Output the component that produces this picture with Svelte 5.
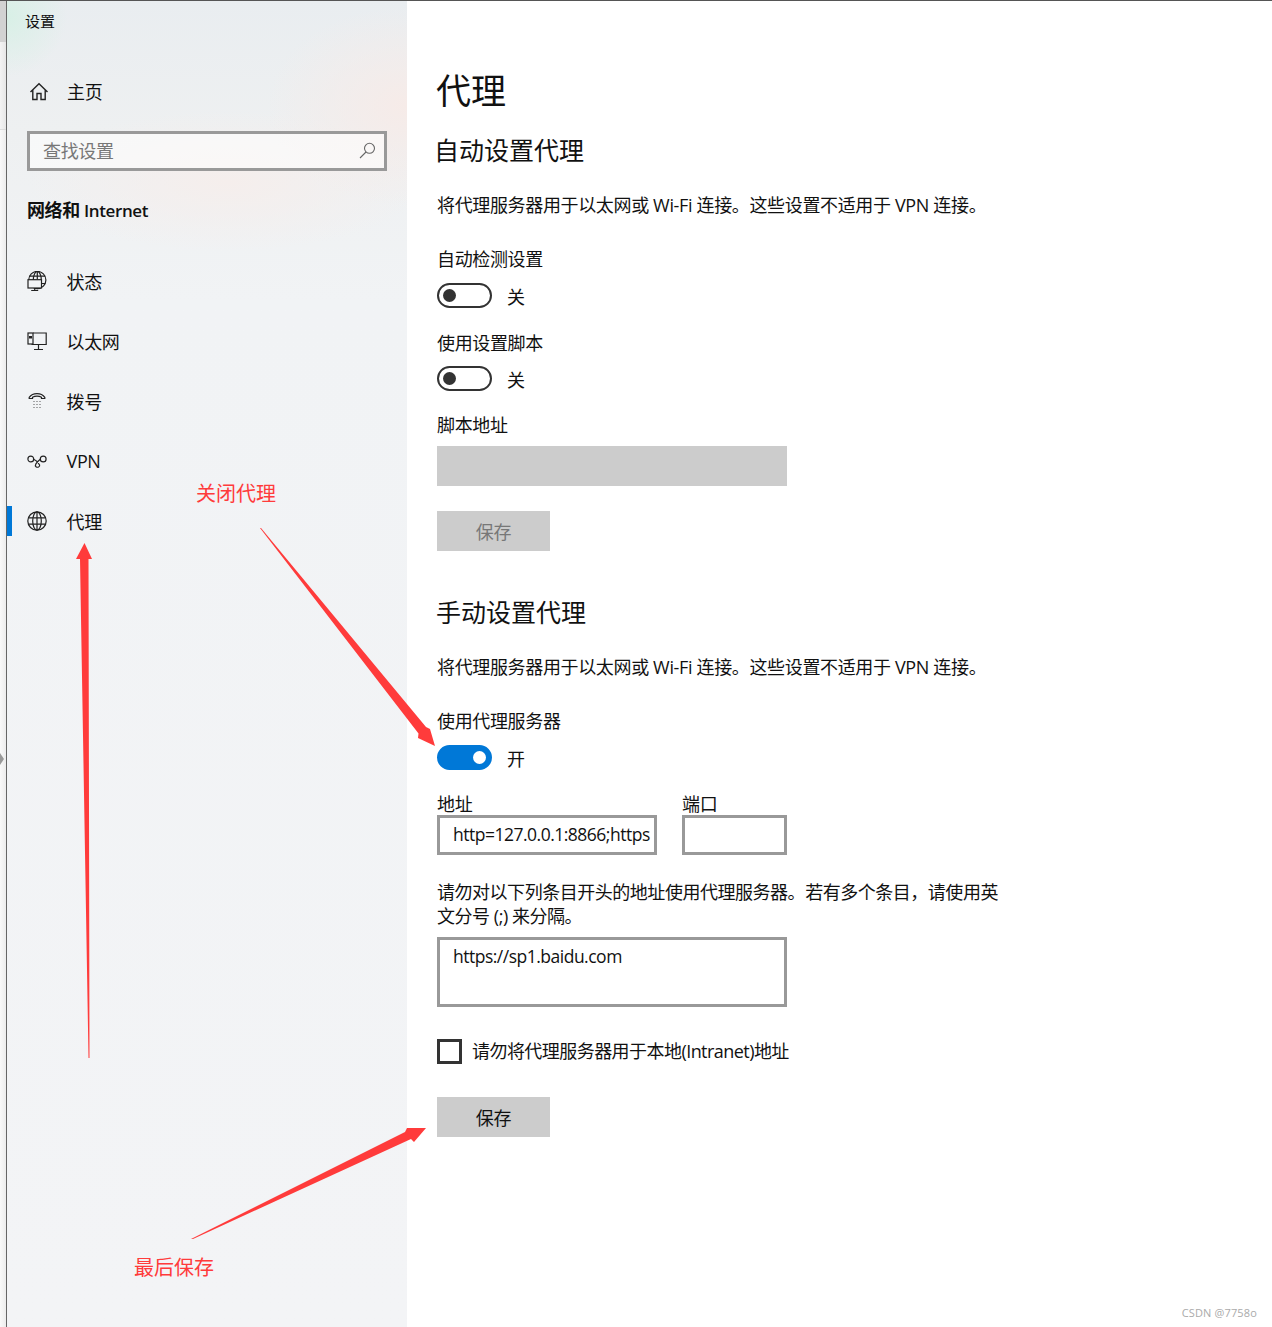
<script>
  const navItems = [
    { label: '状态', icon: 'status' },
    { label: '以太网', icon: 'ethernet' },
    { label: '拨号', icon: 'dial' },
    { label: 'VPN', icon: 'vpn' },
    { label: '代理', icon: 'proxy', active: true }
  ];
  const desc = '将代理服务器用于以太网或 Wi-Fi 连接。这些设置不适用于 VPN 连接。';
</script>

<div class="page">
  <div class="strip">
    <div class="strip-top"></div>
    <div class="strip-mid"></div>
    <div class="strip-low"></div>
    <span class="grip"></span>
  </div>

  <aside class="sidebar">
    <div class="app-title">设置</div>
    <div class="home">
      <svg class="ico" width="20" height="20" viewBox="0 0 20 20" fill="none" stroke="#222" stroke-width="1.4">
        <path d="M1.500 10 10 1.800 18.500 10M3.800 8v9.500h4.200v-6h4v6h4.200V8" />
      </svg>
      <span>主页</span>
    </div>
    <div class="search">
      <span>查找设置</span>
      <svg width="17" height="17" viewBox="0 0 17 17" fill="none" stroke="#666" stroke-width="1.1">
        <circle cx="10.500" cy="6.300" r="5" />
        <path d="M7 10 1 16" />
      </svg>
    </div>
    <div class="group">网络和 <span>Internet</span></div>

    <nav class="nav">
      {#each navItems as item}
        <div class="nav-item" class:active={item.active}>
          <span class="nav-ico">
            {#if item.icon === 'status'}
              <svg width="20" height="20" viewBox="0 0 20 20" fill="none" stroke="#222" stroke-width="1.2">
                <circle cx="10.300" cy="9" r="8.600" />
                <ellipse cx="10.300" cy="9" rx="4" ry="8.600" />
                <path d="M10.300 .4v8M2.500 5.200h15.600M14.500 12.500h3.600" />
                <rect x="1" y="8.700" width="13.500" height="8.300" fill="#f2f4f6" />
                <path d="M7.700 17v2.500M4.200 19.500h7" />
              </svg>
            {:else if item.icon === 'ethernet'}
              <svg width="20" height="20" viewBox="0 0 20 20" fill="none" stroke="#222" stroke-width="1.2">
                <path d="M6 2h13.200v11.500H4.500" />
                <path d="M11.500 13.500v4.800M7 18.500h9" />
                <rect x="1" y="2" width="5" height="11" fill="#f2f4f6" />
                <rect x="2" y="5" width="3" height="2.500" fill="#222" stroke="none" />
              </svg>
            {:else if item.icon === 'dial'}
              <svg width="20" height="20" viewBox="0 0 20 20" fill="none" stroke="#222" stroke-width="1.2">
                <path d="M2.200 7.500V6.300C4 3.800 7 2.600 10 2.600s6 1.200 7.800 3.700v1.200h-3.300V6.300C13 5.500 11.500 5.200 10 5.200s-3 .3-4.500 1.100v1.200z" />
                <path d="M6.500 10.500h1M9.500 10.500h1M12.500 10.500h1M6.500 13.500h1M9.500 13.500h1M12.500 13.500h1M6.500 16.500h1M9.500 16.500h1M12.500 16.500h1" stroke-width="1" opacity=".75" />
              </svg>
            {:else if item.icon === 'vpn'}
              <svg width="20" height="20" viewBox="0 0 20 20" fill="none" stroke="#222" stroke-width="1.2">
                <circle cx="3.800" cy="8" r="2.900" />
                <circle cx="16.200" cy="8" r="2.900" />
                <path d="M6.700 8.300c2.800 1.200 4.900 3.400 5.900 5.700.5 1.900-2 2.800-3.600 1.800-1.500-1.300-.2-3.900 4.300-7.500" />
              </svg>
            {:else}
              <svg width="20" height="20" viewBox="0 0 20 20" fill="none" stroke="#222" stroke-width="1.2">
                <circle cx="10" cy="10" r="9.200" />
                <ellipse cx="10" cy="10" rx="4.300" ry="9.200" />
                <path d="M10 .8v18.400M1.600 6.800h16.800M1.600 13.200h16.800" />
              </svg>
            {/if}
          </span>
          <span class="nav-label">{item.label}</span>
        </div>
      {/each}
    </nav>
  </aside>

  <main class="main">
    <h1>代理</h1>
    <h2 class="auto">自动设置代理</h2>
    <p class="desc">{desc}</p>

    <div class="label first">自动检测设置</div>
    <div class="switch-row">
      <span class="toggle"><i></i></span><span class="state">关</span>
    </div>
    <div class="label next">使用设置脚本</div>
    <div class="switch-row">
      <span class="toggle"><i></i></span><span class="state">关</span>
    </div>
    <div class="label last">脚本地址</div>
    <div class="disabled-input"></div>
    <div class="btn disabled">保存</div>

    <h2 class="manual">手动设置代理</h2>
    <p class="desc">{desc}</p>

    <div class="label first">使用代理服务器</div>
    <div class="switch-row">
      <span class="toggle on"><i></i></span><span class="state">开</span>
    </div>

    <div class="addr-row">
      <div class="field addr">
        <div class="field-label">地址</div>
        <div class="box latin">http=127.0.0.1:8866;https</div>
      </div>
      <div class="field port">
        <div class="field-label">端口</div>
        <div class="box"></div>
      </div>
    </div>

    <p class="except">请勿对以下列条目开头的地址使用代理服务器。若有多个条目，请使用英文分号 (;) 来分隔。</p>
    <div class="box area latin">https://sp1.baidu.com</div>

    <div class="check-row">
      <span class="check"></span>
      <span class="check-text">请勿将代理服务器用于本地(Intranet)地址</span>
    </div>
    <div class="btn">保存</div>
  </main>

  <svg class="arrows" width="1272" height="1327" viewBox="0 0 1272 1327" fill="#ff3b3b">
    <polygon points="89.500,1058 88.500,1058 80,559 76,559 84.500,543 92,559 88.500,559" />
    <polygon points="260,528 261,528 426,727 430,729 435,746 418,738 418.500,733.500" />
    <polygon points="191,1239 405,1132 407,1128 426,1128 414,1142 411,1139 193,1239" />
  </svg>
  <div class="note note-close">关闭代理</div>
  <div class="note note-save">最后保存</div>
  <div class="mark">CSDN @7758o</div>
</div>

<style>
  :global(body) {
    margin: 0;
    background: #fff;
  }
  .page {
    position: relative;
    display: flex;
    width: 1272px;
    height: 1327px;
    overflow: hidden;
    background: #fff;
    color: #111;
    font-family: "Open Sans", "Noto Sans CJK SC", sans-serif;
    font-size: 18px;
    letter-spacing: -0.35px;
    border-top: 1px solid #555;
    box-sizing: border-box;
  }
  .strip {
    position: relative;
    width: 6px;
    flex: none;
    display: flex;
    flex-direction: column;
    border-right: 1px solid #666;
  }
  .strip-top {
    height: 41px;
    background: #d2d2d2;
  }
  .strip-mid {
    height: 87px;
    background: linear-gradient(90deg, #f4f4f4, #e6e6e6);
    border-bottom: 1px solid #dcdcdc;
  }
  .strip-low {
    flex: 1;
    background: linear-gradient(90deg, #fafafa, #ececec);
  }
  .grip {
    position: absolute;
    left: 0;
    top: 752px;
    border-left: 4px solid #999;
    border-top: 6px solid transparent;
    border-bottom: 6px solid transparent;
  }
  .sidebar {
    width: 400px;
    flex: none;
    display: flex;
    flex-direction: column;
    background:
      radial-gradient(60px 60px at 0 15px, #d8f0e6 0, rgba(216, 240, 230, 0) 100%),
      radial-gradient(140px 100px at 100% 105px, #f6ebe8 0, rgba(246, 235, 232, 0) 100%),
      radial-gradient(200px 70px at 55% 180px, #f5eeec 0, rgba(245, 238, 236, 0) 100%),
      linear-gradient(180deg, #e9edf0 0, #eef0f1 130px, #f1f3f5 300px, #f3f4f6 100%);
  }
  .app-title {
    margin: 12px 0 0 18px;
    height: 17px;
    line-height: 17px;
    font-size: 15px;
    letter-spacing: 0;
  }
  .home {
    display: flex;
    align-items: center;
    margin: 50px 0 0 22px;
    height: 22px;
  }
  .home span {
    margin-left: 18px;
  }
  .ico {
    display: block;
    margin-top: 1px;
  }
  .search {
    margin: 29px 0 0 20px;
    width: 360px;
    height: 40px;
    box-sizing: border-box;
    border: 3px solid #999;
    display: flex;
    align-items: center;
    justify-content: space-between;
    padding: 0 8px 2px 13px;
    color: #777;
    background: rgba(255, 255, 255, 0.55);
  }
  .group {
    margin: 27px 0 0 20px;
    height: 24px;
    line-height: 24px;
    font-weight: 700;
    letter-spacing: -0.4px;
  }
  .group span {
    font-size: 17px;
    font-weight: 600;
    letter-spacing: -0.4px;
  }
  .nav {
    margin-top: 29px;
    display: flex;
    flex-direction: column;
  }
  .nav-item {
    position: relative;
    height: 60px;
    display: flex;
    align-items: center;
    padding-left: 20px;
  }
  .nav-item.active::before {
    content: "";
    position: absolute;
    left: 0;
    top: 15px;
    width: 5px;
    height: 30px;
    background: #0078d7;
  }
  .nav-ico {
    width: 20px;
    height: 20px;
    display: block;
  }
  .nav-ico svg {
    display: block;
  }
  .nav-label {
    margin-left: 19.500px;
  }
  .main {
    flex: 1;
    padding-left: 30px;
    min-width: 0;
  }
  h1 {
    margin: 66px 0 0 -1px;
    font-size: 35px;
    line-height: 48px;
    font-weight: 400;
    letter-spacing: 0;
  }
  h2 {
    margin: 0;
    font-size: 25px;
    line-height: 34px;
    font-weight: 400;
    letter-spacing: 0;
  }
  h2.auto {
    margin-top: 18px;
    margin-left: -3px;
  }
  h2.manual {
    margin-top: 44px;
    margin-left: -1px;
  }
  .desc {
    margin: 23px 0 0;
    line-height: 30px;
  }
  .label {
    height: 24px;
    line-height: 24px;
  }
  .label.first {
    margin-top: 27px;
  }
  .label.next {
    margin-top: 23px;
  }
  .label.last {
    margin-top: 21px;
  }
  .switch-row {
    display: flex;
    align-items: center;
    margin-top: 12px;
    height: 25px;
  }
  .label.next + .switch-row {
    margin-top: 11px;
  }
  .label.next + .switch-row + .label.last {
    margin-top: 22px;
  }
  .toggle {
    position: relative;
    display: block;
    width: 55px;
    height: 25px;
    box-sizing: border-box;
    border: 2px solid #333;
    border-radius: 13px;
  }
  .toggle i {
    position: absolute;
    top: 4px;
    left: 4px;
    width: 13px;
    height: 13px;
    border-radius: 50%;
    background: #333;
  }
  .toggle.on {
    background: #0078d7;
    border-color: #0078d7;
  }
  .toggle.on i {
    left: auto;
    right: 4px;
    background: #fff;
  }
  .state {
    margin-left: 15px;
  }
  .disabled-input {
    margin-top: 9px;
    width: 350px;
    height: 40px;
    background: #ccc;
  }
  .btn {
    margin-top: 25px;
    width: 113px;
    height: 40px;
    background: #ccc;
    display: flex;
    align-items: center;
    justify-content: center;
    color: #111;
  }
  .btn.disabled {
    color: #777;
  }
  .addr-row {
    display: flex;
    gap: 25px;
    margin-top: 22px;
  }
  .field.addr {
    width: 220px;
  }
  .field.port {
    width: 105px;
  }
  .field-label {
    height: 23px;
    line-height: 24px;
  }
  .box {
    height: 40px;
    box-sizing: border-box;
    border: 3px solid #999;
    padding: 0 5px 0 13px;
    line-height: 33px;
    background: #fff;
  }
  .latin {
    font-size: 17.5px;
    letter-spacing: -0.5px;
    white-space: nowrap;
  }
  .except {
    margin: 25px 0 0;
    width: 570px;
    line-height: 24px;
    letter-spacing: -0.47px;
  }
  .area {
    margin-top: 9px;
    width: 350px;
    height: 70px;
    line-height: 33px;
  }
  .check-row {
    display: flex;
    align-items: center;
    gap: 10px;
    margin-top: 32px;
    height: 25px;
  }
  .check {
    width: 25px;
    height: 25px;
    box-sizing: border-box;
    border: 3px solid #333;
  }
  .check-text {
    letter-spacing: -0.55px;
    margin-bottom: 3px;
  }
  .check-row + .btn {
    margin-top: 33px;
  }
  .arrows {
    position: absolute;
    left: 0;
    top: -1px;
    pointer-events: none;
  }
  .note {
    position: absolute;
    color: #ff3b3b;
    font-size: 20px;
    line-height: 26px;
    letter-spacing: 0;
  }
  .note-close {
    left: 196px;
    top: 480px;
  }
  .note-save {
    left: 134px;
    top: 1254px;
  }
  .mark {
    position: absolute;
    right: 15px;
    top: 1305px;
    font-size: 11px;
    line-height: 14px;
    letter-spacing: 0.15px;
    color: #aaa;
  }
</style>
